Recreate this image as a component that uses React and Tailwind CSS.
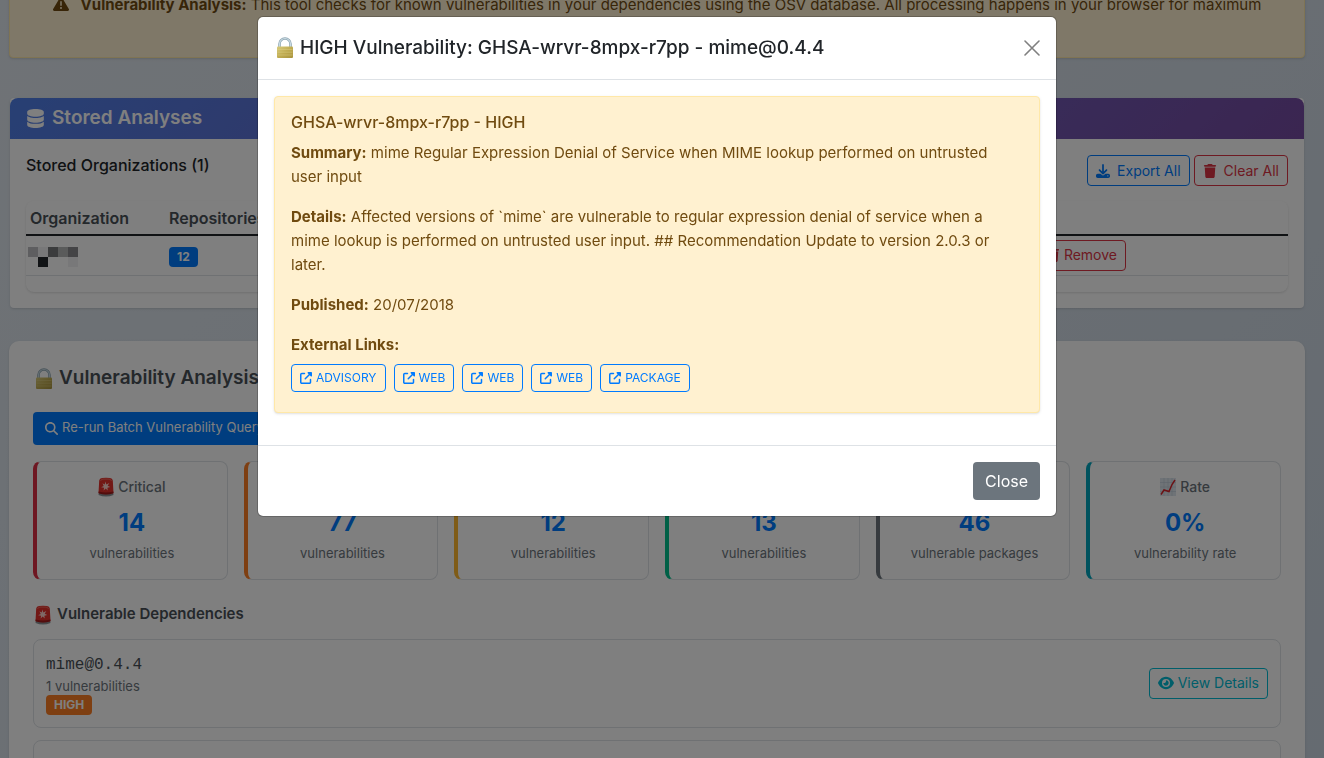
import React, { useState } from 'react';
import {
  FaDatabase,
  FaDownload,
  FaEye,
  FaMagnifyingGlass,
  FaTrash,
  FaTriangleExclamation,
  FaUpRightFromSquare,
} from 'react-icons/fa6';

const stats = [
  { icon: 'siren', title: 'Critical', value: '14', label: 'vulnerabilities', border: 'border-l-[#dc2f45]' },
  { icon: 'siren', title: 'High', value: '77', label: 'vulnerabilities', border: 'border-l-[#fd7e24]' },
  { icon: 'siren', title: 'Medium', value: '12', label: 'vulnerabilities', border: 'border-l-[#ffb830]' },
  { icon: 'siren', title: 'Low', value: '13', label: 'vulnerabilities', border: 'border-l-[#00c08c]' },
  { icon: 'chart', title: 'Packages', value: '46', label: 'vulnerable packages', border: 'border-l-[#6c757d]' },
  { icon: 'chart', title: 'Rate', value: '0%', label: 'vulnerability rate', border: 'border-l-[#00a5bd]' },
];

const dependencies = [
  { name: 'mime@0.4.4', count: 1, severity: 'HIGH' },
  { name: 'qs@0.6.6', count: 2, severity: 'HIGH' },
];

const links = ['ADVISORY', 'WEB', 'WEB', 'WEB', 'PACKAGE'];

const LockIcon = ({ className }) => (
  <svg className={className} viewBox="0 0 20 22" aria-hidden="true">
    <defs>
      <linearGradient id="lockBody" x1="0" y1="0" x2="1" y2="1">
        <stop offset="0" stopColor="#d8cb7c" />
        <stop offset="0.5" stopColor="#c0ac52" />
        <stop offset="1" stopColor="#a8933d" />
      </linearGradient>
    </defs>
    <path d="M4.5 11V7a5.5 5.5 0 0 1 11 0v4" fill="none" stroke="#8fa6b2" strokeWidth="2.6" />
    <path d="M4.5 11V7a5.5 5.5 0 0 1 11 0v4" fill="none" stroke="#c8dbe4" strokeWidth="1.2" />
    <rect x="2" y="9.5" width="16" height="11.5" rx="1" fill="url(#lockBody)" />
    <path d="M2.5 12.5h15M2.5 15.2h15M2.5 18h15" stroke="#e0d48c" strokeWidth="0.6" opacity="0.7" />
  </svg>
);

const SirenIcon = ({ className }) => (
  <svg className={className} viewBox="1 0 16 20" aria-hidden="true">
    <path d="M2 15.500h14l.5 2.500q-7.500 3-15 0z" fill="#8d9499" />
    <path d="M2.200 3.500Q2.500 1.300 5 1q4-.6 8 0 2.500.3 2.800 2.500l.7 12.500q-7.500 2.500-15 0z" fill="#e5302b" />
    <path d="M3.500 4Q4 2.300 6 2.100h6q2 .2 2.500 1.900" fill="none" stroke="#f0766c" strokeWidth="0.8" />
    <path d="M8.500 4.500l.8 3 3-1.400-1.600 2.700 2.500 1.300-2.800.7.300 2.800-2-2-2.100 1.800.5-2.600-3-.5 2.600-1.200L5.500 6.300l2.200 1.300z" fill="#ffd2cc" />
    <path d="M1.700 14.500q7 2.200 14.600 0l.2 1.700q-7.500 2.500-15 0z" fill="#a51c1c" />
  </svg>
);

const ChartIcon = ({ className }) => (
  <svg className={className} viewBox="1 0 16 20" aria-hidden="true">
    <rect x="1" y="1" width="16" height="18" fill="#dfe7ee" />
    <path d="M1 5.500h16M1 10h16M1 14.500h16M5 1v18M9 1v18M13 1v18" stroke="#bccad6" strokeWidth="0.6" />
    <path d="M2 17.500l3-4.500 5 1.500 3-7L16 3" fill="none" stroke="#d9252b" strokeWidth="1.500" />
  </svg>
);

const StatCard = ({ stat }) => (
  <div className={`rounded-lg border border-l-4 border-[#dee2e6] ${stat.border} px-4 pt-[15px] pb-4 text-center`}>
    <h4 className="flex h-5 items-center justify-center gap-1 text-sm font-medium text-[#6c757d]">
      {stat.icon === 'siren' ? <SirenIcon className="h-5 w-4" /> : <ChartIcon className="h-5 w-4" />}
      {stat.title}
    </h4>
    <div className="mt-2 text-2xl leading-9 font-bold text-[#007bff]">{stat.value}</div>
    <div className="mt-0.5 text-[13px] leading-5 text-[#6c757d]">{stat.label}</div>
  </div>
);

const StoredAnalyses = () => (
  <section className="mx-px rounded bg-white shadow-sm">
    <h2 className="flex h-[41px] items-center gap-[7px] rounded-t-lg bg-linear-135 from-[#4f7fe8] to-[#764ba2] px-4 text-[19px] font-semibold text-white">
      <FaDatabase />
      Stored Analyses
    </h2>
    <div className="p-4">
      <div className="flex items-start justify-between">
        <h3 className="text-base leading-5 font-medium text-[#212529]">Stored Organizations (1)</h3>
        <div className="flex gap-1">
          <button className="flex h-[31px] items-center gap-[7px] rounded border border-[#007bff] px-2 text-sm text-[#007bff]">
            <FaDownload /> Export All
          </button>
          <button className="flex h-[31px] items-center gap-[7px] rounded border border-[#dc3545] px-2 text-sm text-[#dc3545]">
            <FaTrash /> Clear All
          </button>
        </div>
      </div>
      <div className="mt-[15px] rounded-lg pb-4 shadow-sm">
        <table className="w-full table-fixed text-left text-[#212529]">
          <thead>
            <tr className="h-[34px] border-b-2 border-[#212529] text-base text-[#495057]">
              <th className="w-[139px] px-1 font-semibold">Organization</th>
              <th className="w-[260px] px-1 font-semibold">Repositories</th>
              <th className="w-[260px] px-1 font-semibold">Dependencies</th>
              <th className="w-[275px] px-1 font-semibold">Updated</th>
              <th className="px-1 font-semibold">Actions</th>
            </tr>
          </thead>
          <tbody>
            <tr className="h-10 border-b border-[#dee2e6]">
              <td>
                <svg className="mt-1 ml-0.5 h-5 w-[50px]" viewBox="0 0 50 20" shapeRendering="crispEdges" aria-hidden="true">
                  <path d="M0 0h10v10H0z" fill="#bdbdc0" />
                  <path d="M10 0h10v10H10zM40 10h10v10H40z" fill="#f0f0f2" />
                  <path d="M20 0h10v10H20z" fill="#77797b" />
                  <path d="M30 0h10v10H30z" fill="#b4b6b7" />
                  <path d="M40 0h10v10H40z" fill="#88898c" />
                  <path d="M10 10h10v10H10z" fill="#23262b" />
                </svg>
              </td>
              <td className="px-1">
                <span className="inline-block rounded bg-[#007bff] px-2 text-xs leading-5 font-bold text-white">12</span>
              </td>
              <td className="px-1">1,204</td>
              <td className="px-1">20/08/2025</td>
              <td className="px-1">
                <div className="flex gap-1">
                  <button className="flex h-[31px] items-center gap-1 rounded border border-[#007bff] px-2 text-sm text-[#007bff]">
                    <FaEye /> Load
                  </button>
                  <button className="flex h-[31px] items-center gap-1 rounded border border-[#dc3545] px-2 text-sm text-[#dc3545]">
                    <FaTrash /> Remove
                  </button>
                </div>
              </td>
            </tr>
          </tbody>
        </table>
      </div>
    </div>
  </section>
);

const VulnerabilityAnalysis = () => (
  <section className="rounded-[10px] bg-white p-6 shadow-sm">
    <h2 className="flex h-7 items-center gap-1 text-[19px] font-semibold text-[#495057]">
      <LockIcon className="h-[22px] w-[22px]" />
      Vulnerability Analysis
    </h2>
    <button className="mt-[19px] flex h-[33px] items-center gap-1 rounded-sm bg-[#007bff] px-3 text-[13px] text-white">
      <FaMagnifyingGlass />
      Re-run Batch Vulnerability Query
    </button>
    <div className="mt-4 grid grid-cols-6 gap-4">
      {stats.map((stat) => (
        <StatCard key={stat.title} stat={stat} />
      ))}
    </div>
    <h3 className="mt-[23px] mb-3 flex h-6 items-center gap-1 text-[15px] font-semibold text-[#495057]">
      <SirenIcon className="h-5 w-5" />
      Vulnerable Dependencies
    </h3>
    <ul className="flex flex-col gap-3">
      {dependencies.map((dep) => (
        <li key={dep.name} className="flex items-center justify-between rounded-lg border border-[#dee2e6] p-3">
          <div>
            <div className="font-['Liberation_Mono',monospace] text-base leading-[26px] text-[#495057]">{dep.name}</div>
            <div className="text-[13px] leading-[17px] text-[#6c757d]">{dep.count} vulnerabilities</div>
            <span className="block w-fit rounded bg-[#fd7e24] px-2 text-xs leading-5 font-bold text-white">
              {dep.severity}
            </span>
          </div>
          <button className="flex h-[31px] items-center gap-1 rounded-sm border border-[#00bcd4] px-2 text-sm text-[#00bcd4]">
            <FaEye className="text-base" /> View Details
          </button>
        </li>
      ))}
    </ul>
  </section>
);

const VulnerabilityModal = ({ onClose }) => (
  <div className="fixed inset-0 flex items-start justify-center bg-black/50 pt-4 pr-[10px]">
    <div
      role="dialog"
      aria-modal="true"
      aria-labelledby="modal-title"
      className="w-full max-w-[800px] rounded-md border border-black/20 bg-white bg-clip-padding"
    >
      <div className="flex items-center justify-between border-b border-[#dee2e6] p-4">
        <h5 id="modal-title" className="flex items-center gap-1 text-[19px] leading-[30px] font-medium text-[#212529]">
          <LockIcon className="h-[22px] w-[22px]" />
          HIGH Vulnerability: GHSA-wrvr-8mpx-r7pp - mime@0.4.4
        </h5>
        <button aria-label="Close dialog" onClick={onClose} className="text-[#808080]">
          <svg className="h-4 w-4" viewBox="0 0 16 16" aria-hidden="true">
            <path d="M1 1l14 14M15 1L1 15" stroke="currentColor" strokeWidth="1.600" strokeLinecap="round" />
          </svg>
        </button>
      </div>

      <div className="p-4 pb-8">
        <div className="rounded-sm border border-[#ffe8a8] bg-[#fff1d0] p-4 pb-5 text-[15px] leading-6 text-[#704b10] shadow-sm">
          <h6 className="mb-[10px] text-base leading-[18px] font-medium">GHSA-wrvr-8mpx-r7pp - HIGH</h6>
          <p className="mb-4 pr-4">
            <strong>Summary:</strong> mime Regular Expression Denial of Service when MIME lookup performed on untrusted
            user input
          </p>
          <p className="mb-4 pr-4">
            <strong>Details:</strong> Affected versions of `mime` are vulnerable to regular expression denial of service
            when a mime lookup is performed on untrusted user input. ## Recommendation Update to version 2.0.3 or later.
          </p>
          <p className="mb-4 pr-4">
            <strong>Published:</strong> 20/07/2018
          </p>
          <strong>External Links:</strong>
          <div className="mt-[7px] flex gap-2">
            {links.map((link, index) => (
              <a
                key={index}
                href="#"
                className="flex h-7 items-center gap-1 rounded border border-[#007bff] px-2 text-xs text-[#007bff]"
              >
                <FaUpRightFromSquare /> {link}
              </a>
            ))}
          </div>
        </div>
      </div>

      <div className="flex justify-end border-t border-[#dee2e6] p-4">
        <button onClick={onClose} className="h-[38px] rounded bg-[#6c757d] px-3 text-base text-white">
          Close
        </button>
      </div>
    </div>
  </div>
);

const App = () => {
  const [showModal, setShowModal] = useState(true);

  return (
    <div className="h-screen overflow-hidden bg-linear-135 from-[#dfe6ed] to-[#cbd6e2] font-['Inter',sans-serif]">
      <main className="-mt-6 pr-[19px] pl-[9px]">
        <div className="mb-10 rounded-sm border border-[#ffe8a8] bg-[#fff1d0] p-4 text-center text-[15px] leading-6 text-[#704b10] shadow-sm">
          <FaTriangleExclamation className="mr-3 inline align-[-2px] text-base" />
          <strong>Vulnerability Analysis:</strong> This tool checks for known vulnerabilities in your dependencies using
          the OSV database. All processing happens in your browser for maximum privacy.
        </div>
        <StoredAnalyses />
        <div className="mt-[33px]">
          <VulnerabilityAnalysis />
        </div>
      </main>
      {showModal && <VulnerabilityModal onClose={() => setShowModal(false)} />}
    </div>
  );
};

export default App;
